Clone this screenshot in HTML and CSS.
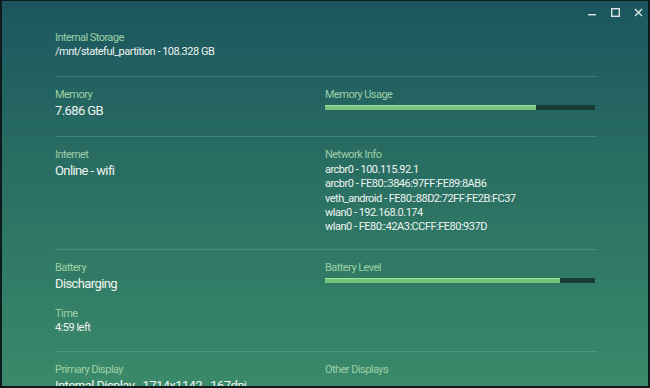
FILE: index.html
```html
<!DOCTYPE html>
<html lang="en">
<head>
  <meta charset="UTF-8" />
  <title>System Info</title>
  <link rel="stylesheet" href="styles.css">
</head>
<body>
  <div class="janela">
    <div class="barra-titulo">
      <svg class="controle" width="9" height="9" viewBox="0 0 9 9"><rect x="0" y="6" width="8" height="1.4" fill="#d9e6e3"/></svg>
      <svg class="controle" width="9" height="9" viewBox="0 0 9 9"><rect x="0.7" y="0.7" width="7.6" height="7.6" fill="none" stroke="#d9e6e3" stroke-width="1.4"/></svg>
      <svg class="controle" width="9" height="9" viewBox="0 0 9 9"><path d="M1 1 L8 8 M8 1 L1 8" stroke="#d9e6e3" stroke-width="1.4"/></svg>
    </div>

    <div class="conteudo">
      <div class="secao primeira">
        <div class="item">
          <div class="rotulo">Internal Storage</div>
          <div class="valor">/mnt/stateful_partition - 108.328 GB</div>
        </div>
      </div>

      <div class="secao">
        <div class="item">
          <div class="rotulo">Memory</div>
          <div class="valor grande">7.686 GB</div>
        </div>
        <div class="item">
          <div class="rotulo">Memory Usage</div>
          <div class="barra"><div class="preenchido" style="width: 78%"></div></div>
        </div>
      </div>

      <div class="secao rede">
        <div class="item">
          <div class="rotulo">Internet</div>
          <div class="valor grande">Online - wifi</div>
        </div>
        <div class="item">
          <div class="rotulo">Network Info</div>
          <div class="linhas">
            <div>arcbr0 - 100.115.92.1</div>
            <div>arcbr0 - FE80::3846:97FF:FE89:8AB6</div>
            <div>veth_android - FE80::88D2:72FF:FE2B:FC37</div>
            <div>wlan0 - 192.168.0.174</div>
            <div>wlan0 - FE80::42A3:CCFF:FE80:937D</div>
          </div>
        </div>
      </div>

      <div class="secao">
        <div class="item">
          <div class="rotulo">Battery</div>
          <div class="valor grande">Discharging</div>
          <div class="rotulo espaco">Time</div>
          <div class="valor">4:59 left</div>
        </div>
        <div class="item">
          <div class="rotulo">Battery Level</div>
          <div class="barra"><div class="preenchido" style="width: 87%"></div></div>
        </div>
      </div>

      <div class="secao">
        <div class="item">
          <div class="rotulo">Primary Display</div>
          <div class="valor grande">Internal Display - 1714x1142 - 167dpi</div>
        </div>
        <div class="item">
          <div class="rotulo">Other Displays</div>
          <div class="valor grande">-</div>
        </div>
      </div>
    </div>
  </div>
</body>
</html>
```

FILE: styles.css
```css
html, body {
  margin: 0;
  padding: 0;
  background: #111;
  font-family: Roboto, 'Noto Sans', sans-serif;
  overflow: hidden;
}

.janela {
  width: 646px;
  height: 385px;
  border-top: 1px solid #0e1a1c;
  border-left: 2px solid #0e1a1c;
  border-right: 2px solid #0e1a1c;
  border-bottom: 2px solid #0e1a1c;
  background: linear-gradient(to bottom, #1b5660 0%, #286c62 40%, #3a8a6a 100%);
  overflow: hidden;
}

.barra-titulo {
  height: 19px;
  display: flex;
  justify-content: flex-end;
  align-items: center;
  gap: 14px;
  padding-right: 5px;
}

.controle {
  display: block;
  margin-top: 3px;
}

.conteudo {
  padding: 0 51px 0 53px;
}

.secao {
  display: grid;
  grid-template-columns: 270px 270px;
  border-top: 1px solid rgba(160, 220, 190, 0.22);
  padding: 11px 0 16px;
}

.secao.primeira {
  border-top: none;
  padding-bottom: 17px;
}

.secao.rede {
  padding-bottom: 15px;
}

.rotulo {
  font-size: 11px;
  line-height: 14px;
  letter-spacing: -0.55px;
  color: #9dd0a4;
}

.rotulo.espaco {
  margin-top: 14px;
}

.valor {
  font-size: 11px;
  line-height: 14px;
  letter-spacing: -0.5px;
  color: #eef4f0;
}

.valor.grande {
  font-size: 13px;
  line-height: 18px;
  letter-spacing: -0.6px;
}

.linhas {
  font-size: 11px;
  line-height: 14.25px;
  letter-spacing: -0.5px;
  color: #eef4f0;
  margin-top: 1px;
}

.barra {
  height: 5px;
  margin-top: 3px;
  background: #173d36;
}

.preenchido {
  height: 100%;
  background: #74c47b;
  border-top: 1px solid #9edfa2;
  box-sizing: border-box;
}
```
